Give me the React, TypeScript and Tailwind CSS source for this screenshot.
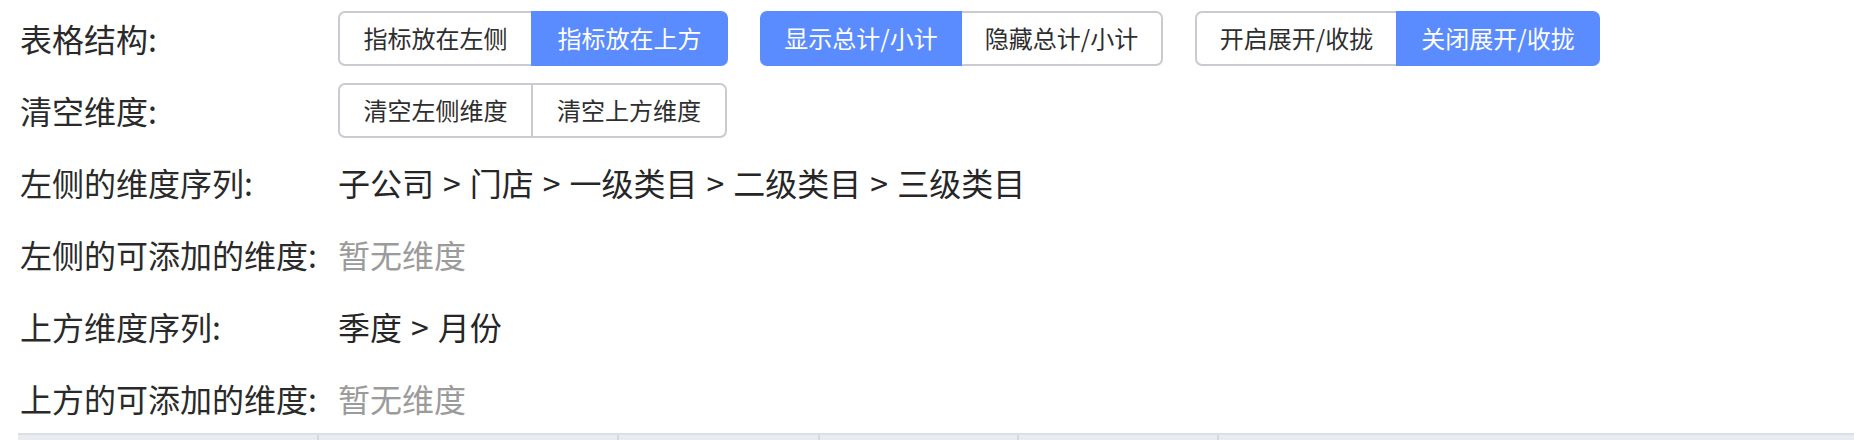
import type { ReactNode } from 'react';

type Opt = { text: string; width: string; active?: boolean };

function Group({ options }: { options: Opt[] }) {
  return (
    <div className="flex">
      {options.map((o, i) => (
        <button
          key={o.text}
          type="button"
          className={[
            'relative flex h-[55px] items-center justify-center border-2 text-[24px] leading-none',
            o.width,
            i > 0 ? '-ml-[2px]' : '',
            i === 0 ? 'rounded-l-[7px]' : '',
            i === options.length - 1 ? 'rounded-r-[7px]' : '',
            o.active ? 'z-10 border-[#5a8bff] bg-[#5a8bff] text-white' : 'border-[#c9cbd1] bg-white text-[#2e2e2e]',
          ].join(' ')}
        >
          {o.text}
        </button>
      ))}
    </div>
  );
}

function Row({ label, children }: { label: string; children: ReactNode }) {
  return (
    <div className="flex h-[72px] items-center">
      <div className="w-[320px] shrink-0 pl-[2px] text-[32px] leading-none text-[#2a2a2a]">{label}</div>
      <div className="flex items-center text-[32px] leading-none">{children}</div>
    </div>
  );
}

function Path({ items }: { items: string[] }) {
  return (
    <span className="flex items-center text-[#262626]">
      {items.map((t, i) => (
        <span key={t} className="flex items-center">
          {i > 0 && <span className="mx-[9px]">&gt;</span>}
          {t}
        </span>
      ))}
    </span>
  );
}

const columns = ['w-[299px]', 'w-[300px]', 'w-[201px]', 'w-[199px]', 'w-[200px]', 'flex-1'];

export default function App() {
  return (
    <div className="min-h-screen overflow-hidden bg-white pl-[18px] pt-[2px] font-['Noto_Sans_CJK_SC',sans-serif]">
      <Row label="表格结构:">
        <div className="flex gap-[32px]">
          <Group
            options={[
              { text: '指标放在左侧', width: 'w-[195px]' },
              { text: '指标放在上方', width: 'w-[197px]', active: true },
            ]}
          />
          <Group
            options={[
              { text: '显示总计/小计', width: 'w-[202px]', active: true },
              { text: '隐藏总计/小计', width: 'w-[203px]' },
            ]}
          />
          <Group
            options={[
              { text: '开启展开/收拢', width: 'w-[203px]' },
              { text: '关闭展开/收拢', width: 'w-[204px]', active: true },
            ]}
          />
        </div>
      </Row>
      <Row label="清空维度:">
        <Group
          options={[
            { text: '清空左侧维度', width: 'w-[195px]' },
            { text: '清空上方维度', width: 'w-[196px]' },
          ]}
        />
      </Row>
      <Row label="左侧的维度序列:">
        <Path items={['子公司', '门店', '一级类目', '二级类目', '三级类目']} />
      </Row>
      <Row label="左侧的可添加的维度:">
        <span className="text-[#9b9b9b]">暂无维度</span>
      </Row>
      <Row label="上方维度序列:">
        <Path items={['季度', '月份']} />
      </Row>
      <Row label="上方的可添加的维度:">
        <span className="text-[#9b9b9b]">暂无维度</span>
      </Row>

      <div className="-mt-[1px] flex h-[40px] border-t-2 border-[#dcdfe5] bg-[#e8ebf0]">
        {columns.map((c, i) => (
          <div key={i} className={`${c} h-full ${i > 0 ? 'border-l-2 border-[#d5d9e0]' : ''}`} />
        ))}
      </div>
    </div>
  );
}
